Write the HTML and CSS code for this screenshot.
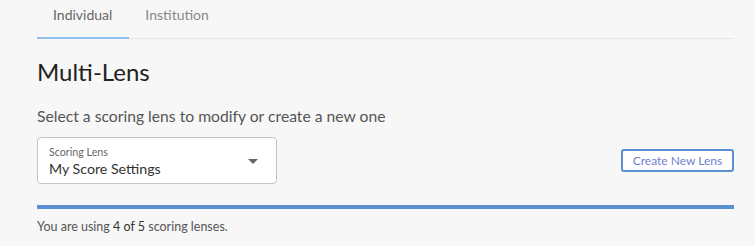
FILE: index.html
```html
<!DOCTYPE html>
<html lang="en">
<head>
    <meta charset="UTF-8">
    <title>Multi-Lens</title>
    <link rel="stylesheet" href="styles.css">
</head>
<body>

<div class="page">
    <!-- Tabs -->
    <div class="tabs">
        <div class="tab active">Individual</div>
        <div class="tab">Institution</div>
    </div>

    <h1>Multi-Lens</h1>
    <p class="intro">Select a scoring lens to modify or create a new one</p>

    <!-- Lens picker row -->
    <div class="lens-row">
        <div class="lens-select">
            <div class="lens-label">Scoring Lens</div>
            <div class="lens-value">My Score Settings</div>
            <span class="caret"></span>
        </div>
        <button class="new-lens">Create New Lens</button>
    </div>

    <div class="usage-bar"></div>
    <p class="usage">You are using <b>4 of 5</b> scoring lenses.</p>
</div>

</body>
</html>
```

FILE: styles.css
```css
/* Global Styles */
body {
    margin: 0;
    background: #f7f7f7;
    font-family: Lato, 'Open Sans', sans-serif;
    color: #555;
}

.page {
    padding: 0 21px 0 37px;
}

/* Tabs */
.tabs {
    display: flex;
    border-bottom: 1px solid #e6e6e6;
}

.tab {
    font-size: 14px;
    color: #888;
    padding: 6px 16px 14px;
    border-bottom: 2px solid transparent;
    margin-bottom: -1px;
}

.tab.active {
    color: #666;
    padding: 6px 17px 14px 16px;
    border-bottom-color: #8fc0ee;
}

/* Heading */
h1 {
    font-size: 24px;
    font-weight: 400;
    color: #222;
    margin: 18px 0 0;
}

.intro {
    font-size: 15.7px;
    color: #555;
    margin: 21px 0 0;
}

/* Lens row */
.lens-row {
    display: flex;
    justify-content: space-between;
    align-items: center;
    margin-top: 12px;
}

.lens-select {
    position: relative;
    width: 216px;
    height: 45px;
    padding: 0 11px;
    border: 1px solid #c4c4c4;
    border-radius: 4px;
    background: #fff;
}

.lens-label {
    font-size: 10.7px;
    color: #666;
    margin-top: 7px;
}

.lens-value {
    font-size: 14.2px;
    color: #333;
    margin-top: 2px;
}

.caret {
    position: absolute;
    right: 18px;
    top: 21px;
    border-left: 5px solid transparent;
    border-right: 5px solid transparent;
    border-top: 5px solid #666;
}

.new-lens {
    font-family: inherit;
    font-size: 12px;
    color: #6f80d0;
    background: #fff;
    border: 2px solid #5b8fd4;
    border-radius: 3px;
    padding: 0;
    height: 23px;
    width: 113px;
    white-space: nowrap;
}

/* Usage */
.usage-bar {
    height: 4px;
    background: #5b8fd4;
    margin-top: 21px;
}

.usage {
    font-size: 12.5px;
    color: #555;
    margin: 10px 0 0;
}

.usage b {
    font-weight: 400;
    color: #333;
}
```
